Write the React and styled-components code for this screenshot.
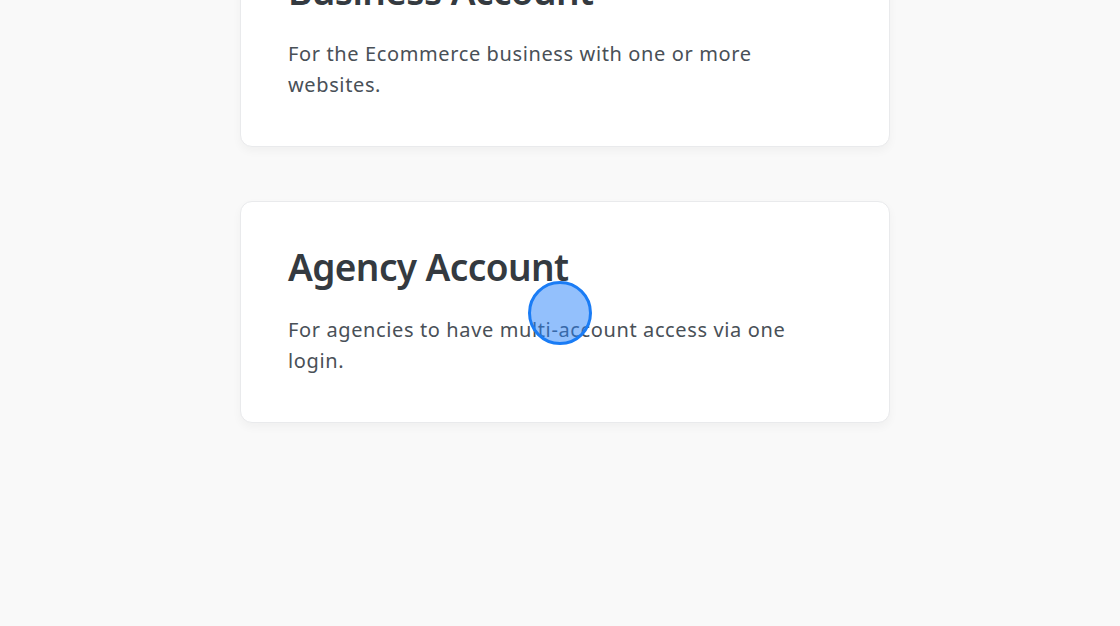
import React from 'react';
import styled, { createGlobalStyle } from 'styled-components';

const GlobalStyle = createGlobalStyle`
  html, body {
    margin: 0;
    padding: 0;
    background: #f9f9f9;
    height: 100%;
    overflow: hidden;
  }
  body {
    font-family: "Noto Sans", "Open Sans", sans-serif;
  }
`;

const Page = styled.div`
  position: relative;
  display: flow-root;
  min-height: 626px;
  background: #f9f9f9;
`;

const List = styled.div`
  width: 650px;
  margin: -75px 0 0 240px;
  display: flex;
  flex-direction: column;
  gap: 54px;
`;

const Card = styled.div`
  box-sizing: border-box;
  height: 222px;
  padding: 42px 47px 0;
  background: #fff;
  border: 1px solid #e9eaec;
  border-radius: 12px;
  box-shadow: 0 4px 10px rgba(0, 0, 0, 0.04);
`;

const Title = styled.h2`
  margin: 0 0 24px;
  font-size: 37px;
  line-height: 46px;
  font-weight: 600;
  letter-spacing: -0.6px;
  color: #343a40;
`;

const Text = styled.p`
  margin: 0;
  max-width: 520px;
  font-size: 20px;
  line-height: 31px;
  letter-spacing: 0.62px;
  color: #495057;
`;

const Cursor = styled.div`
  position: absolute;
  left: 528px;
  top: 281px;
  width: 64px;
  height: 64px;
  box-sizing: border-box;
  border-radius: 50%;
  border: 3px solid #1a7cf5;
  background: rgba(40, 130, 250, 0.5);
`;

const accounts = [
  { title: 'Business Account', text: 'For the Ecommerce business with one or more websites.' },
  { title: 'Agency Account', text: 'For agencies to have multi-account access via one login.' },
];

export default function App() {
  return (
    <Page>
      <GlobalStyle />
      <List>
        {accounts.map((a) => (
          <Card key={a.title}>
            <Title>{a.title}</Title>
            <Text>{a.text}</Text>
          </Card>
        ))}
      </List>
      <Cursor />
    </Page>
  );
}
